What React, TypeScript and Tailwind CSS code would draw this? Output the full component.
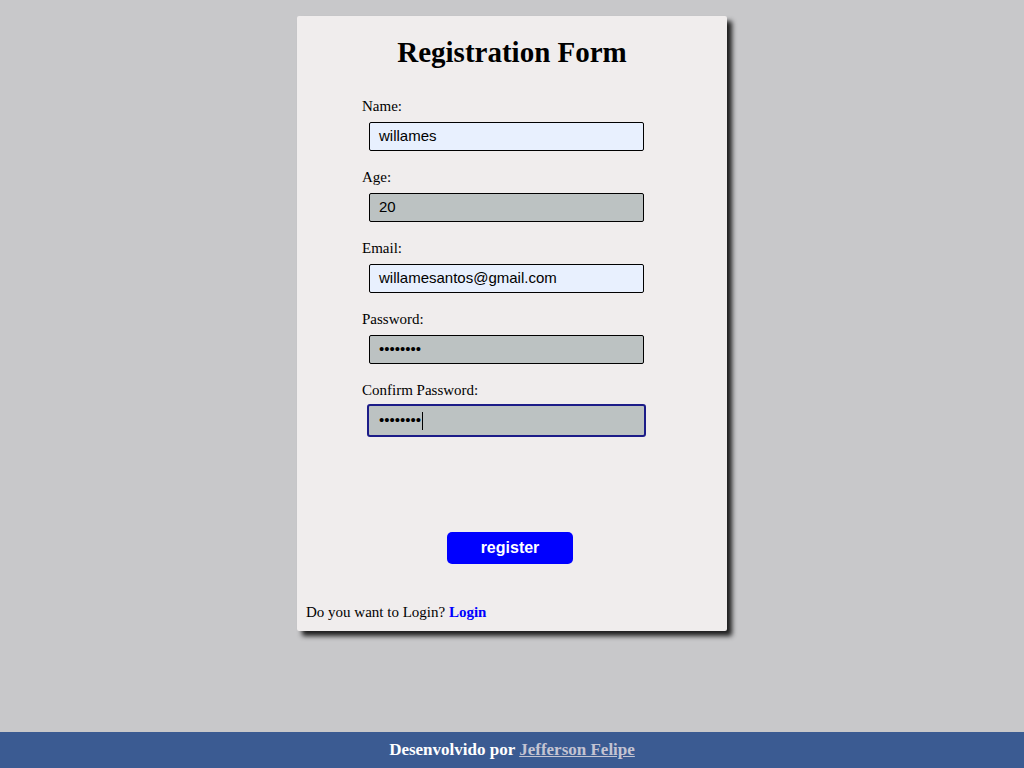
import React from "react";

const serif = "font-['Times_New_Roman','Liberation_Serif',serif]";
const sans = "font-['Arial','Liberation_Sans',sans-serif]";

function Field({
  label,
  value,
  bg,
  focused,
  caret,
}: {
  label: string;
  value: string;
  bg: string;
  focused?: boolean;
  caret?: boolean;
}) {
  return (
    <div className="mb-[17px]">
      <div className={`${serif} text-[15px] leading-[18px] text-black`}>{label}</div>
      <div className="mt-[7px] ml-[7px]">
        <div
          className={
            focused
              ? `${sans} ${bg} -mx-[2px] -my-[2px] flex h-[33px] w-[279px] items-center rounded-[3px] border-2 border-[#1c1c88] pl-[10px] text-[15px] text-black`
              : `${sans} ${bg} flex h-[29px] w-[275px] items-center rounded-[2px] border border-black pl-[9px] text-[15px] text-black`
          }
        >
          <span>{value}</span>
          {caret && <span className="ml-[1px] inline-block h-[18px] w-px bg-black" />}
        </div>
      </div>
    </div>
  );
}

export default function App() {
  return (
    <div className="flex h-screen w-full flex-col bg-[#c8c8ca]">
      <div className="mx-auto mt-[16px] w-[430px] rounded-[2px] bg-[#f0eded] shadow-[5px_5px_5px_rgba(0,0,0,0.85)]">
        <h1 className={`${serif} mt-[18px] text-center text-[29px] font-bold leading-[37px] text-black`}>
          Registration Form
        </h1>
        <div className="mt-[26px] pl-[65px]">
          <Field label="Name:" value="willames" bg="bg-[#e8f0fe]" />
          <Field label="Age:" value="20" bg="bg-[#bcc2c2]" />
          <Field label="Email:" value="willamesantos@gmail.com" bg="bg-[#e8f0fe]" />
          <Field label="Password:" value="••••••••" bg="bg-[#bcc2c2]" />
          <Field label="Confirm Password:" value="••••••••" bg="bg-[#bcc2c2]" focused caret />
        </div>
        <button
          className={`${sans} ml-[150px] mt-[97px] flex h-[32px] w-[126px] items-center justify-center rounded-[5px] bg-[#0000ff] text-[16px] font-bold text-white`}
        >
          register
        </button>
        <div className={`${serif} mt-[39px] pb-[10px] pl-[9px] text-[15px] leading-[18px] text-black`}>
          Do you want to Login? <a className="font-bold text-[#0000ff]">Login</a>
        </div>
      </div>
      <div className={`${serif} mt-auto flex h-[36px] items-center justify-center bg-[#3b5b92] text-[17px] font-bold text-white`}>
        <span>
          Desenvolvido por <a className="text-[#c4c4d2] underline">Jefferson Felipe</a>
        </span>
      </div>
    </div>
  );
}
